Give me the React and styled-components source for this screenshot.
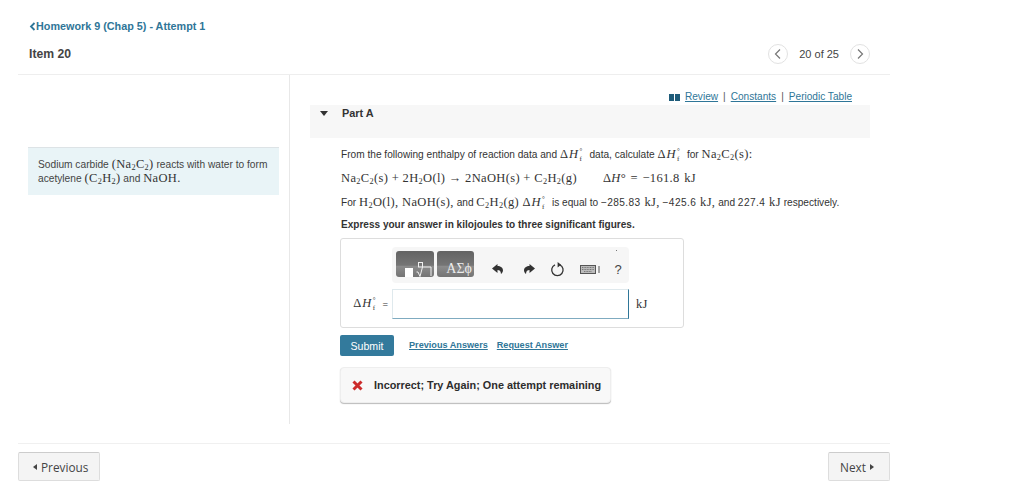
import React from "react";
import styled, { createGlobalStyle } from "styled-components";

const teal = "#2f7698";

const GlobalStyle = createGlobalStyle`
  html, body { margin: 0; padding: 0; background: #fff; }
  body { font-family: "Liberation Sans", Arial, sans-serif; color: #333; overflow: hidden; }
`;

const Page = styled.div`
  width: 872px;
  height: 501px;
  margin-left: 18px;
  display: flex;
  flex-direction: column;
`;

const Header = styled.header`
  height: 75px;
  box-sizing: border-box;
  padding: 19px 20px 0 11px;
  border-bottom: 1px solid #eee;
`;

const BackLink = styled.a`
  display: flex;
  align-items: center;
  height: 14px;
  color: ${teal};
  font-size: 10.8px;
  font-weight: bold;
`;

const ItemRow = styled.div`
  display: flex;
  justify-content: space-between;
  align-items: center;
  margin-top: 10px;
  height: 22px;
`;

const ItemTitle = styled.div`
  font-size: 12.2px;
  font-weight: bold;
  color: #444;
`;

const Pager = styled.div`
  display: flex;
  align-items: center;
  gap: 11px;
  font-size: 11px;
  color: #444;
`;

const RoundButton = styled.span`
  width: 20px;
  height: 20px;
  box-sizing: border-box;
  border: 1px solid #e2e2e2;
  border-radius: 50%;
  display: flex;
  align-items: center;
  justify-content: center;
`;

const Content = styled.main`
  display: flex;
  height: 349px;
`;

const LeftColumn = styled.aside`
  width: 272px;
  box-sizing: border-box;
  border-right: 1px solid #e8e8e8;
  padding: 72px 10px 0;
`;

const IntroBox = styled.div`
  height: 48px;
  box-sizing: border-box;
  border-top: 1px solid #dde3e6;
  background: #e9f4f7;
  padding: 10px 10px 0;
  font-size: 10.2px;
  line-height: 14px;
  color: #444;
  white-space: nowrap;
`;

const RightColumn = styled.section`
  flex: 1;
  padding: 14px 20px 0;
`;

const Tools = styled.div`
  display: flex;
  justify-content: flex-end;
  align-items: flex-start;
  gap: 5px;
  padding-right: 18px;
  height: 16px;
  font-size: 10.1px;
  line-height: 16px;
  color: #555;
`;

const ToolLink = styled.a`
  color: ${teal};
  text-decoration: underline;
`;

const ReviewLink = styled(ToolLink)`
  display: flex;
  align-items: center;
  gap: 5px;
`;

const PartBand = styled.div`
  height: 33px;
  background: #f7f7f7;
  display: flex;
  align-items: flex-start;
  gap: 14px;
  padding: 1px 0 0 10px;
  box-sizing: border-box;
  font-size: 10.9px;
  font-weight: bold;
  color: #333;
  line-height: 14px;
`;

const Body = styled.div`
  padding-left: 30px;
`;

const Line = styled.p`
  margin: 0;
  padding-left: 1px;
  height: ${(p) => p.$h || 24}px;
  line-height: ${(p) => p.$h || 24}px;
  font-size: ${(p) => (p.$bold ? 10.05 : 10.15)}px;
  font-weight: ${(p) => (p.$bold ? "bold" : "normal")};
  color: #333;
  white-space: nowrap;
  &:first-of-type { margin-top: 5px; }
`;

const Math = styled.span`
  font-family: "Liberation Serif", "Times New Roman", serif;
  font-size: ${(p) => p.$size || 12.5}px;
  letter-spacing: 0.35px;
  line-height: 1;
  font-weight: normal;
  color: #333;
  sub { font-size: 0.66em; line-height: 0; vertical-align: -0.25em; }
`;

const Num = styled.span`
  letter-spacing: 0.4px;
  margin-right: 1px;
`;

const Delta = styled.span`
  letter-spacing: 1px;
`;

const Italic = styled.i`
  font-style: italic;
`;

const Stack = styled.span`
  display: inline-flex;
  flex-direction: column;
  vertical-align: middle;
  font-size: 7px;
  line-height: 8px;
  margin: 0 4px 0 1px;
`;

const Equation = styled.span`
  margin-left: 26px;
  word-spacing: 1px;
`;

const AnswerBox = styled.div`
  width: 344px;
  height: 90px;
  box-sizing: border-box;
  margin-top: 3px;
  border: 1px solid #ddd;
  border-radius: 3px;
  padding: 8px 0 0 51px;
`;

const Toolbar = styled.div`
  position: relative;
  width: 237px;
  height: 36px;
  box-sizing: border-box;
  background: #f6f6f6;
  border-radius: 4px;
  padding: 4px;
  display: flex;
  align-items: flex-start;
`;

const ToolbarDot = styled.span`
  position: absolute;
  top: 3px;
  right: 12px;
  width: 1px;
  height: 1px;
  background: #777;
`;

const PaletteButton = styled.span`
  position: relative;
  flex: none;
  width: ${(p) => p.$w}px;
  height: 26px;
  margin-right: 3px;
  border-radius: 3px;
  background: linear-gradient(#636363 0%, #757575 55%, #8c8c8c 58%, #747474 100%);
  color: #ececec;
  display: flex;
  align-items: flex-end;
  justify-content: flex-end;
  font-family: "Liberation Serif", serif;
  font-size: 14px;
  line-height: 16px;
  padding-right: 2px;
  box-sizing: border-box;
  overflow: hidden;
`;

const WhiteSquare = styled.span`
  position: absolute;
  left: 9px;
  bottom: 0;
  width: 8px;
  height: 9px;
  background: #fff;
`;

const ToolIcons = styled.div`
  display: flex;
  align-items: center;
  height: 26px;
  margin-top: 5px;
  margin-left: 4px;
`;

const ToolSlot = styled.span`
  width: ${(p) => p.$w}px;
  display: flex;
  justify-content: center;
  align-items: center;
`;

const Help = styled.span`
  font-size: 13px;
  color: #444;
  line-height: 13px;
`;

const AnswerRow = styled.div`
  position: relative;
  display: flex;
  align-items: center;
  margin-top: 6px;
  gap: 7px;
`;

const AnswerLabel = styled.span`
  position: absolute;
  right: 100%;
  margin-right: 4px;
  white-space: nowrap;
  font-size: 9.5px;
`;

const AnswerInput = styled.div`
  width: 237px;
  height: 30px;
  box-sizing: border-box;
  border: 1px solid #dfe9ed;
  border-right-color: ${teal};
  border-bottom-color: #7fabc0;
`;

const Actions = styled.div`
  display: flex;
  align-items: center;
  gap: 15px;
  margin-top: 7px;
`;

const SubmitButton = styled.button`
  width: 54px;
  height: 21px;
  padding: 0;
  border: none;
  border-radius: 2px;
  background: #337a9c;
  color: #fff;
  font: 10.6px "Liberation Sans", Arial, sans-serif;
`;

const ActionLinks = styled.div`
  display: flex;
  gap: 9px;
  padding-bottom: 2px;
  font-size: 9.15px;
  font-weight: bold;
  color: ${teal};
`;

const ActionLink = styled.a`
  text-decoration: underline;
`;

const Feedback = styled.div`
  width: 271px;
  height: 36px;
  margin-top: 11px;
  box-sizing: border-box;
  padding-left: 11px;
  display: flex;
  align-items: center;
  gap: 11px;
  background: #f8f8f8;
  border: 1px solid #eee;
  border-radius: 4px;
  box-shadow: 0 1px 1px #bbb;
  font-size: 10.87px;
  font-weight: bold;
  color: #2d2d2d;
  white-space: nowrap;
`;

const Footer = styled.footer`
  margin-top: 19px;
  border-top: 1px solid #f0f0f0;
  padding-top: 8px;
  display: flex;
  justify-content: space-between;
`;

const FooterButton = styled.span`
  width: ${(p) => p.$w}px;
  height: 29px;
  box-sizing: border-box;
  padding-left: ${(p) => p.$pad}px;
  display: flex;
  align-items: center;
  gap: 4px;
  background: #f4f4f4;
  border: 1px solid #ddd;
  border-top-color: #ccc;
  border-radius: 2px;
  font-family: "Open Sans", sans-serif;
  font-size: 11.8px;
  color: #444;
`;

const Chevron = ({ dir = "left" }) => (
  <svg width="12" height="12" viewBox="0 0 12 12" fill="none">
    <path
      d={dir === "left" ? "M8 1.500 3.500 6 8 10.500" : "M4 1.500 8.500 6 4 10.500"}
      stroke="#777"
      strokeWidth="1.200"
    />
  </svg>
);

const BackChevron = () => (
  <svg width="7" height="9" viewBox="0 0 7 9" fill="none">
    <path d="M5.500 1 2 4.500 5.500 8" stroke={teal} strokeWidth="1.800" />
  </svg>
);

const BookIcon = () => (
  <svg width="11" height="7" viewBox="0 0 11 7">
    <path d="M0 0h5v7H0zM6 0h5v7H6z" fill="#1f5c7a" />
  </svg>
);

const Caret = ({ dir }) => (
  <svg width="4" height="6" viewBox="0 0 4 6">
    <path d={dir === "left" ? "M4 0v6L0 3z" : "M0 0v6l4-3z"} fill="#444" />
  </svg>
);

const ArrowIcon = ({ flip }) => (
  <svg width="11" height="12" viewBox="0 0 11 12" style={flip ? { transform: "scaleX(-1)" } : undefined}>
    <path d="M5.500 1 0 5.500 5.500 10V7c2 0 3.300.8 3.500 4 1.300-1 2-2.300 2-3.700 0-2.500-2.500-4.300-5.500-4.300z" fill="#333" />
  </svg>
);

const ResetIcon = () => (
  <svg width="15" height="16" viewBox="0 0 15 16" fill="none">
    <path d="M9.800 3.800a5.700 5.700 0 1 1-4.800 0" stroke="#333" strokeWidth="1.300" />
    <path d="M7.600 1v5.400l3.500-2.700z" fill="#333" />
  </svg>
);

const KeyboardIcon = () => (
  <svg width="21" height="9" viewBox="0 0 21 9">
    <rect x="0.500" y="0.500" width="15" height="8" fill="#bbb" stroke="#555" />
    <path d="M2 2.500h12M2 4.500h12M4 6.500h8" stroke="#666" strokeWidth="0.800" strokeDasharray="1 0.600" />
    <path d="M19 1v7" stroke="#555" />
  </svg>
);

const CrossIcon = () => (
  <svg width="11" height="11" viewBox="0 0 11 11">
    <path d="M1.500 1.500 9.500 9.500M9.500 1.500 1.500 9.500" stroke="#cc2b2b" strokeWidth="3" />
  </svg>
);

const TriangleDown = () => (
  <svg width="8" height="5" viewBox="0 0 8 5" style={{ marginTop: 5 }}>
    <path d="M0 0h8L4 5z" fill="#333" />
  </svg>
);

const RootIcon = () => (
  <svg width="22" height="22" viewBox="0 0 22 22" fill="none" stroke="#f0f0f0" strokeWidth="1">
    <rect x="8.500" y="7.500" width="4" height="4.500" />
    <path d="M6.500 17h1.500l2 4.500 2.500-9.500h8.500v9" />
  </svg>
);

const Enthalpy = () => (
  <>
    <Delta>Δ</Delta>
    <Italic>H</Italic>
    <Stack>
      <span>°</span>
      <span>f</span>
    </Stack>
  </>
);

export default function App() {
  return (
    <Page>
      <GlobalStyle />
      <Header>
        <BackLink>
          <BackChevron />
          Homework 9 (Chap 5) - Attempt 1
        </BackLink>
        <ItemRow>
          <ItemTitle>Item 20</ItemTitle>
          <Pager>
            <RoundButton>
              <Chevron />
            </RoundButton>
            20 of 25
            <RoundButton>
              <Chevron dir="right" />
            </RoundButton>
          </Pager>
        </ItemRow>
      </Header>

      <Content>
        <LeftColumn>
          <IntroBox>
            Sodium carbide <Math>(Na<sub>2</sub>C<sub>2</sub>)</Math> reacts with water to form
            <br />
            acetylene <Math>(C<sub>2</sub>H<sub>2</sub>)</Math> and <Math>NaOH.</Math>
          </IntroBox>
        </LeftColumn>

        <RightColumn>
          <Tools>
            <ReviewLink>
              <BookIcon />
              Review
            </ReviewLink>
            |<ToolLink>Constants</ToolLink>|<ToolLink>Periodic Table</ToolLink>
          </Tools>
          <PartBand>
            <TriangleDown />
            Part A
          </PartBand>
          <Body>
            <Line>
              From the following enthalpy of reaction data and{" "}
              <Math><Enthalpy /></Math> data, calculate <Math><Enthalpy /></Math> for{" "}
              <Math>Na<sub>2</sub>C<sub>2</sub>(s):</Math>
            </Line>
            <Line>
              <Math>
                Na<sub>2</sub>C<sub>2</sub>(s) + 2H<sub>2</sub>O(l) → 2NaOH(s) + C<sub>2</sub>H<sub>2</sub>(g)
                <Equation>Δ<Italic>H</Italic>° = −161.8 kJ</Equation>
              </Math>
            </Line>
            <Line>
              For <Math>H<sub>2</sub>O(l), NaOH(s),</Math> and{" "}
              <Math>C<sub>2</sub>H<sub>2</sub>(g) <Enthalpy /></Math> is equal to <Num>−285.83</Num>{" "}
              <Math>kJ,</Math> <Num>−425.6</Num> <Math>kJ,</Math> and <Num>227.4</Num> <Math>kJ</Math> respectively.
            </Line>
            <Line $bold $h={20}>
              Express your answer in kilojoules to three significant figures.
            </Line>
            <AnswerBox>
              <Toolbar>
                <ToolbarDot />
                <PaletteButton $w={38}>
                  <WhiteSquare />
                  <RootIcon />
                </PaletteButton>
                <PaletteButton $w={37}>ΑΣϕ</PaletteButton>
                <ToolIcons>
                  <ToolSlot $w={32}><ArrowIcon /></ToolSlot>
                  <ToolSlot $w={32}><ArrowIcon flip /></ToolSlot>
                  <ToolSlot $w={24}><ResetIcon /></ToolSlot>
                  <ToolSlot $w={42}><KeyboardIcon /></ToolSlot>
                  <ToolSlot $w={14}><Help>?</Help></ToolSlot>
                </ToolIcons>
              </Toolbar>
              <AnswerRow>
                <AnswerLabel>
                  <Math><Enthalpy /></Math> =
                </AnswerLabel>
                <AnswerInput />
                <Math>kJ</Math>
              </AnswerRow>
            </AnswerBox>
            <Actions>
              <SubmitButton>Submit</SubmitButton>
              <ActionLinks>
                <ActionLink>Previous Answers</ActionLink>
                <ActionLink>Request Answer</ActionLink>
              </ActionLinks>
            </Actions>
            <Feedback>
              <CrossIcon />
              Incorrect; Try Again; One attempt remaining
            </Feedback>
          </Body>
        </RightColumn>
      </Content>

      <Footer>
        <FooterButton $w={82} $pad={14}>
          <Caret dir="left" />
          Previous
        </FooterButton>
        <FooterButton $w={62} $pad={11}>
          Next
          <Caret dir="right" />
        </FooterButton>
      </Footer>
    </Page>
  );
}
